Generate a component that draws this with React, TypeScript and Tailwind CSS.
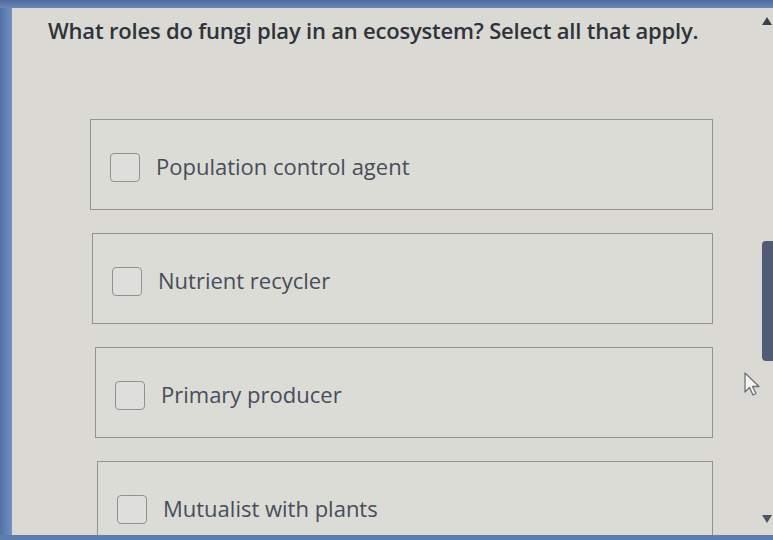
const options = [
  { label: 'Population control agent', indent: 'ml-[78px]' },
  { label: 'Nutrient recycler', indent: 'ml-[80px]' },
  { label: 'Primary producer', indent: 'ml-[83px]' },
  { label: 'Mutualist with plants', indent: 'ml-[85px]' },
];

function Checkbox() {
  return <div className="w-[30px] h-[29px] shrink-0 rounded-[4px] border-[1.5px] border-[#8e9196] bg-[#dedfda]" />;
}

function Cursor() {
  return (
    <svg width="20" height="26" viewBox="0 0 20 26" className="absolute left-[743px] top-[372px]">
      <path d="M2 1 L2 20 L6.5 15.5 L10 23 L13 21.5 L9.5 14.5 L16 14.5 Z" fill="#f4f4f2" stroke="#6e7278" strokeWidth="1.3" strokeLinejoin="round" />
    </svg>
  );
}

export default function App() {
  return (
    <div
      className="relative w-[773px] h-[540px] overflow-hidden bg-[#5876a8] flex flex-col"
      style={{ fontFamily: '"Open Sans", "Noto Sans", sans-serif' }}
    >
      <div className="h-[8px] shrink-0 bg-gradient-to-b from-[#4f6b9c] to-[#6a88b8]" />
      <div className="flex flex-1 min-h-0">
        <div className="w-[12px] shrink-0 bg-gradient-to-r from-[#5070a6] to-[#7590bf]" />
        <div className="flex-1 flex bg-[#dad9d3] min-w-0">
          <main className="flex-1 min-w-0 pt-[7px]">
            <h1 className="ml-[36px] text-[22px] leading-[30px] font-semibold text-[#2f333b] tracking-[-0.2px]">
              What roles do fungi play in an ecosystem? Select all that apply.
            </h1>
            <div className="mt-[74px] mr-[40px] flex flex-col gap-[23px]">
              {options.map((o) => (
                <div
                  key={o.label}
                  className={`${o.indent} h-[91px] shrink-0 flex items-center gap-[16px] pl-[19px] pt-[6px] border-[1.5px] border-[#8f9398] bg-[#dcdcd6]`}
                >
                  <Checkbox />
                  <span className="text-[22px] leading-[28px] font-medium text-[#474d5b] -mt-[4px]">{o.label}</span>
                </div>
              ))}
            </div>
          </main>
          <aside className="w-[20px] shrink-0 flex flex-col items-end pt-[9px] pb-[12px]">
            <svg width="10" height="8" viewBox="0 0 10 8" className="mr-[1px]">
              <path d="M5 0 L10 8 L0 8 Z" fill="#39404f" />
            </svg>
            <div className="mt-[216px] w-[11px] h-[120px] rounded-l-[4px] bg-[#505b76]" />
            <div className="flex-1" />
            <svg width="10" height="8" viewBox="0 0 10 8" className="mr-[1px]">
              <path d="M0 0 L10 0 L5 8 Z" fill="#4c5568" />
            </svg>
          </aside>
        </div>
      </div>
      <div className="h-[5px] shrink-0 bg-[#5d7db2]" />
      <Cursor />
    </div>
  );
}
